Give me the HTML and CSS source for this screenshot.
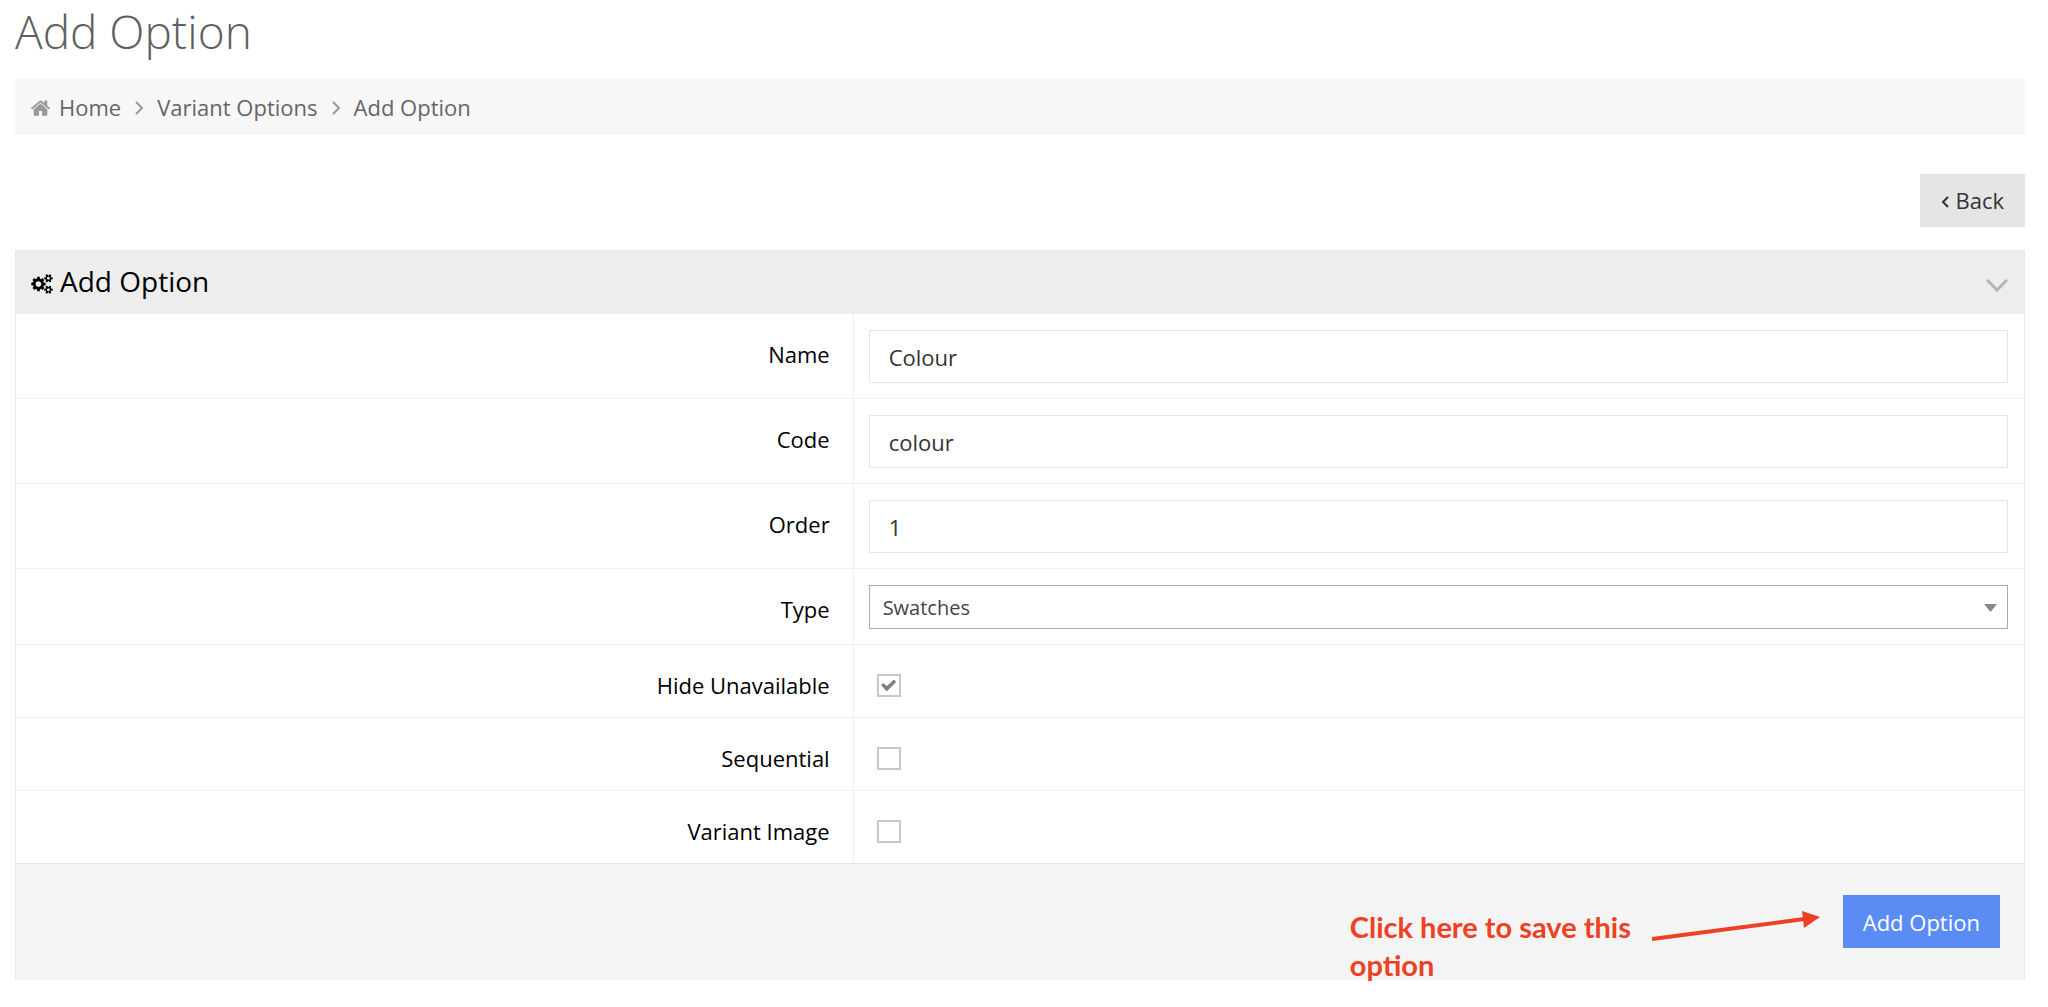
FILE: index.html
```html
<!DOCTYPE html>
<html lang="en">
<head>
<meta charset="utf-8">
<meta name="viewport" content="width=device-width, initial-scale=1">
<title>Add Option</title>
<link rel="stylesheet" href="styles.css">
</head>
<body>
<main class="page">
  <h1 class="page-title">Add Option</h1>
  <nav class="breadcrumb" aria-label="Breadcrumb">
    <svg class="icon-home" viewBox="90 240 1612 1296" aria-hidden="true"><path d="M1472 992v480q0 26-19 45t-45 19h-384v-384h-256v384h-384q-26 0-45-19t-19-45v-480q0-1 .5-3t.5-3l575-474 575 474q1 2 1 6zm223-69l-62 74q-8 9-21 11h-3q-13 0-21-7l-692-577-692 577q-12 8-24 7-13-2-21-11l-62-74q-8-10-7-23.500t11-21.500l719-599q32-26 76-26t76 26l244 204v-195q0-14 9-23t23-9h192q14 0 23 9t9 23v408l219 182q10 8 11 21.500t-7 23.500z"/></svg>
    <a href="#">Home</a>
    <svg class="icon-sep" viewBox="0 0 8 14" aria-hidden="true"><path d="M1 1l6 6-6 6"/></svg>
    <a href="#">Variant Options</a>
    <svg class="icon-sep" viewBox="0 0 8 14" aria-hidden="true"><path d="M1 1l6 6-6 6"/></svg>
    <a href="#">Add Option</a>
  </nav>
  <div class="toolbar">
    <button class="btn btn-back" type="button"><svg class="icon-back" viewBox="0 0 8 12" aria-hidden="true"><path d="M7 1L2 6l5 5"/></svg>Back</button>
  </div>
  <form class="panel">
    <header class="panel-head">
      <svg class="icon-cogs" viewBox="0 0 1920 1792" aria-hidden="true"><path d="M896 896q0-106-75-181t-181-75-181 75-75 181 75 181 181 75 181-75 75-181zm768 512q0-52-38-90t-90-38-90 38-38 90q0 53 37.500 90.500t90.500 37.500 90.500-37.500 37.500-90.500zm0-1024q0-52-38-90t-90-38-90 38-38 90q0 53 37.500 90.500t90.500 37.500 90.500-37.500 37.500-90.500zm-384 421v185q0 10-7 19.500t-16 10.500l-155 24q-11 35-32 76 34 48 90 115 7 11 7 20 0 12-7 19-23 30-82.500 89.500t-78.500 59.500q-11 0-21-7l-115-90q-37 19-77 31-11 108-23 155-7 24-30 24h-186q-11 0-20-7.500t-10-17.500l-23-153q-34-10-75-31l-118 89q-7 7-20 7-11 0-21-8-144-133-144-160 0-9 7-19 10-14 41-53t47-61q-23-44-35-82l-152-24q-10-1-17-9.500t-7-19.500v-185q0-10 7-19.500t16-10.500l155-24q11-35 32-76-34-48-90-115-7-11-7-20 0-12 7-20 22-30 82-89t79-59q11 0 21 7l115 90q34-18 77-32 11-108 23-154 7-24 30-24h186q11 0 20 7.500t10 17.500l23 153q34 10 75 31l118-89q8-7 20-7 11 0 21 8 144 133 144 160 0 8-7 19-12 16-42 54t-45 60q23 48 34 82l152 23q10 2 17 10.500t7 19.500zm640 533v140q0 16-149 31-12 27-30 52 51 113 51 138 0 4-4 7-122 71-124 71-8 0-46-47t-52-68q-20 2-30 2t-30-2q-14 21-52 68t-46 47q-2 0-124-71-4-3-4-7 0-25 51-138-18-25-30-52-149-15-149-31v-140q0-16 149-31 13-29 30-52-51-113-51-138 0-4 4-7 4-2 35-20t59-34 30-16q8 0 46 46.500t52 67.500q20-2 30-2t30 2q51-71 92-112l6-2q4 0 124 70 4 3 4 7 0 25-51 138 17 23 30 52 149 15 149 31zm0-1024v140q0 16-149 31-12 27-30 52 51 113 51 138 0 4-4 7-122 71-124 71-8 0-46-47t-52-68q-20 2-30 2t-30-2q-14 21-52 68t-46 47q-2 0-124-71-4-3-4-7 0-25 51-138-18-25-30-52-149-15-149-31v-140q0-16 149-31 13-29 30-52-51-113-51-138 0-4 4-7 4-2 35-20t59-34 30-16q8 0 46 46.500t52 67.500q20-2 30-2t30 2q51-71 92-112l6-2q4 0 124 70 4 3 4 7 0 25-51 138 17 23 30 52 149 15 149 31z"/></svg>
      <h2 class="panel-title">Add Option</h2>
      <button class="collapse" type="button" aria-label="Collapse"><svg viewBox="0 0 22 13" aria-hidden="true"><path d="M1 1l10 10L21 1"/></svg></button>
    </header>
    <div class="row">
      <label class="row-label" for="name">Name</label>
      <div class="row-field"><input class="text" id="name" type="text" value="Colour"></div>
    </div>
    <div class="row">
      <label class="row-label" for="code">Code</label>
      <div class="row-field"><input class="text" id="code" type="text" value="colour"></div>
    </div>
    <div class="row">
      <label class="row-label" for="order">Order</label>
      <div class="row-field"><input class="text" id="order" type="text" value="1"></div>
    </div>
    <div class="row">
      <label class="row-label" for="type">Type</label>
      <div class="row-field"><div class="select-wrap"><select class="select" id="type"><option>Swatches</option></select></div></div>
    </div>
    <div class="row">
      <label class="row-label" for="hide">Hide Unavailable</label>
      <div class="row-field row-check"><input class="check" id="hide" type="checkbox" checked></div>
    </div>
    <div class="row">
      <label class="row-label" for="sequential">Sequential</label>
      <div class="row-field row-check"><input class="check" id="sequential" type="checkbox"></div>
    </div>
    <div class="row">
      <label class="row-label" for="image">Variant Image</label>
      <div class="row-field row-check"><input class="check" id="image" type="checkbox"></div>
    </div>
    <footer class="panel-foot">
      <p class="hint">Click here to save this option</p>
      <svg class="arrow" viewBox="0 0 168 32" aria-hidden="true"><path class="arrow-line" d="M0 28L152 8"/><path class="arrow-head" d="M150 0L168 6L152 17z"/></svg>
      <button class="btn btn-primary" type="submit">Add Option</button>
    </footer>
  </form>
</main>
</body>
</html>
```

FILE: styles.css
```css
* {
  box-sizing: border-box;
}

body {
  margin: 0;
  background: #fff;
  color: #000;
  font: 22px/30px "Open Sans", "Noto Sans", sans-serif;
}

svg {
  display: block;
  flex: none;
}

.page {
  padding: 0 23px 27px 15px;
}

.page-title {
  margin: 0;
  padding-bottom: 17px;
  color: #606060;
  font-size: 46px;
  font-weight: 300;
  line-height: 62px;
}

.breadcrumb {
  display: flex;
  align-items: center;
  height: 56px;
  padding: 0 16px;
  background: #f7f7f7;
}

.breadcrumb a {
  color: #666;
  text-decoration: none;
}

.icon-home {
  width: 19px;
  height: 16px;
  margin: 2px 9px 0 0;
  fill: #999;
}

.icon-sep {
  width: 8px;
  height: 14px;
  margin: 2px 14px 0;
  fill: none;
  stroke: #999;
  stroke-width: 2;
}

.toolbar {
  display: flex;
  justify-content: flex-end;
  padding: 39px 0 23px;
}

.btn {
  display: flex;
  align-items: center;
  height: 53px;
  border: 0;
  font: inherit;
}

.btn-back {
  gap: 6px;
  padding: 0 21px 2px;
  background: #e5e5e5;
  color: #333;
}

.icon-back {
  width: 8px;
  height: 12px;
  margin-top: 4px;
  fill: none;
  stroke: #333;
  stroke-width: 2;
}

.panel {
  border: 1px solid #e9e9e9;
  border-bottom: 0;
}

.panel-head {
  display: flex;
  align-items: center;
  height: 63px;
  padding: 0 16px 4px 15px;
  background: #ededed;
}

.icon-cogs {
  width: 22px;
  height: 20px;
  margin: 6px 7px 0 0;
}

.panel-title {
  flex: 1;
  margin: 0;
  font-size: 28px;
  font-weight: 400;
  line-height: 36px;
}

.collapse {
  width: 22px;
  margin-top: 10px;
  padding: 0;
  border: 0;
  background: none;
}

.collapse svg {
  fill: none;
  stroke: #b5b5b5;
  stroke-width: 3;
}

.row {
  display: grid;
  grid-template-columns: 5fr 7fr;
  border-bottom: 1px solid #f0f0f0;
}

.row:nth-last-child(2) {
  border-bottom-color: #e5e5e5;
}

.row-label {
  padding: 25px 23px 0 0;
  text-align: right;
}

.row-field {
  padding: 16px 16px 15px 15px;
  border-left: 1px solid #f0f0f0;
}

.row-check {
  padding: 29px 23px 20px;
}

.text {
  display: block;
  width: 100%;
  height: 53px;
  padding: 0 19px;
  border: 1px solid #e5e5e5;
  background: #fff;
  color: #333;
  font: inherit;
}

.select-wrap {
  position: relative;
}

.select-wrap::after {
  position: absolute;
  top: 19px;
  right: 11px;
  width: 13px;
  height: 8px;
  background: #888;
  clip-path: polygon(0 0, 100% 0, 50% 100%);
  content: "";
  pointer-events: none;
}

.select {
  display: block;
  width: 100%;
  height: 44px;
  padding: 2px 13px 0;
  appearance: none;
  border: 1px solid #aaa;
  border-radius: 0;
  background: #fff;
  color: #444;
  font: inherit;
  font-size: 20px;
}

.check {
  display: grid;
  place-items: center;
  width: 24px;
  height: 23px;
  margin: 0;
  appearance: none;
  border: 2px solid #c8c8c8;
  background: #fff;
}

.check:checked::after {
  width: 15px;
  height: 12px;
  background: #808080;
  clip-path: polygon(0 48%, 14% 30%, 37% 55%, 86% 0, 100% 20%, 37% 100%);
  content: "";
}

.panel-foot {
  display: flex;
  justify-content: flex-end;
  align-items: flex-start;
  padding: 31px 24px 0 0;
  height: 116px;
  background: #f4f4f4;
}

.hint {
  width: 300px;
  margin: 13px 2px 0 0;
  color: #ee4023;
  font: 700 29px/38px Lato, "Open Sans", sans-serif;
}

.arrow {
  width: 168px;
  height: 32px;
  margin: 16px 23px 0 0;
}

.arrow-line {
  fill: none;
  stroke: #ee4023;
  stroke-width: 4;
}

.arrow-head {
  fill: #ee4023;
}

.btn-primary {
  padding: 0 20px;
  background: #5b8cf3;
  color: #fff;
}
```
